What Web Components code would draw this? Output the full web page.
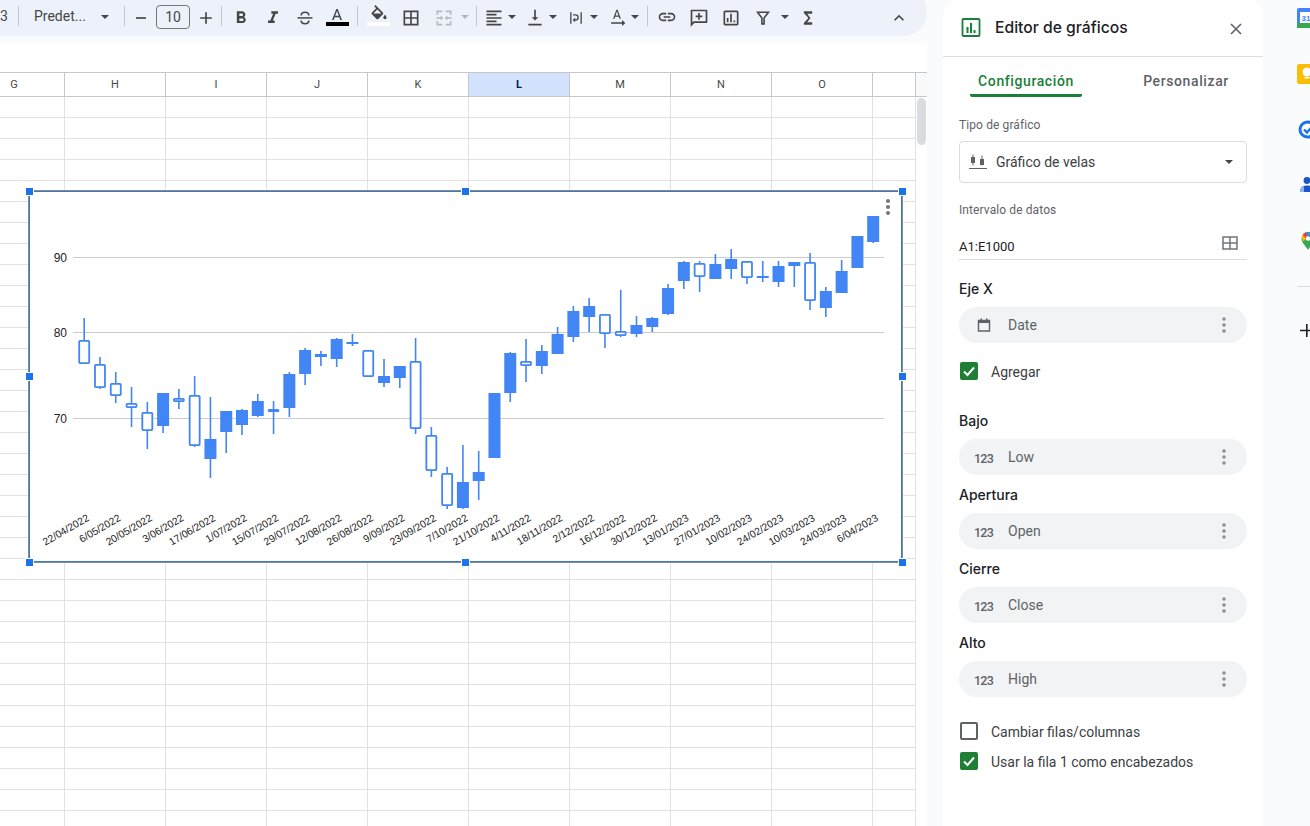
<!doctype html>
<html lang="es">
<head>
<meta charset="utf-8">
<title>Editor de gráficos</title>
<style>
  html, body { margin: 0; height: 100%; overflow: hidden; background: #f9fbfd; }
  body { font-family: Roboto, "Liberation Sans", sans-serif; }
  app-shell { height: 826px; }
</style>
</head>
<body>
<app-shell>
  <sheet-area slot="sheet">
    <sheet-toolbar slot="toolbar">
      <tb-btn w="18" text="3" pad="0"></tb-btn>
      <tb-sep></tb-sep>
      <tb-btn w="105" text="Predet..." pad="15" gap="15" caret></tb-btn>
      <tb-sep></tb-sep>
      <tb-btn w="31" icon="minus"></tb-btn>
      <tb-size>10</tb-size>
      <tb-btn w="31" icon="plus"></tb-btn>
      <tb-sep></tb-sep>
      <tb-btn w="3"></tb-btn>
      <tb-btn icon="bold"></tb-btn>
      <tb-btn icon="italic"></tb-btn>
      <tb-btn icon="strike"></tb-btn>
      <tb-btn icon="textcolor" size="24"></tb-btn>
      <tb-btn w="4"></tb-btn>
      <tb-sep></tb-sep>
      <tb-btn w="3"></tb-btn>
      <tb-btn icon="fill" size="24"></tb-btn>
      <tb-btn w="2"></tb-btn>
      <tb-btn icon="borders"></tb-btn>
      <tb-btn w="1"></tb-btn>
      <tb-btn icon="merge"></tb-btn>
      <tb-btn w="16" caret dim pad="1"></tb-btn>
      <tb-sep></tb-sep>
      <tb-btn w="4"></tb-btn>
      <tb-btn w="41" icon="align" pad="4" gap="5" caret></tb-btn>
      <tb-btn w="41" icon="valign" pad="4" gap="5" caret></tb-btn>
      <tb-btn w="41" icon="wrap" pad="4" gap="5" caret></tb-btn>
      <tb-btn w="41" icon="rotate" pad="4" gap="5" caret></tb-btn>
      <tb-btn w="2"></tb-btn>
      <tb-sep></tb-sep>
      <tb-btn w="3"></tb-btn>
      <tb-btn icon="link"></tb-btn>
      <tb-btn icon="comment"></tb-btn>
      <tb-btn icon="chart"></tb-btn>
      <tb-btn w="45" icon="filter" pad="7" gap="9" caret></tb-btn>
      <tb-btn icon="sigma"></tb-btn>
      <tb-btn class="end" icon="chevron"></tb-btn>
    </sheet-toolbar>
    <col-header slot="header">
      <col-cell class="first">G</col-cell>
      <col-cell>H</col-cell>
      <col-cell>I</col-cell>
      <col-cell>J</col-cell>
      <col-cell>K</col-cell>
      <col-cell selected>L</col-cell>
      <col-cell>M</col-cell>
      <col-cell>N</col-cell>
      <col-cell>O</col-cell>
    </col-header>
    <sheet-grid slot="grid">
      <candle-chart></candle-chart>
    </sheet-grid>
  </sheet-area>
  <chart-editor slot="panel"></chart-editor>
  <side-rail slot="rail"></side-rail>
</app-shell>

<script>
const ICONS = {
  minus: '<path d="M6 11h12v2H6z"/>',
  plus: '<path d="M19 13h-6v6h-2v-6H5v-2h6V5h2v6h6z"/>',
  bold: '<path d="M15.6 10.79c.97-.67 1.65-1.77 1.65-2.79 0-2.26-1.75-4-4-4H7v14h7.04c2.09 0 3.71-1.7 3.71-3.79 0-1.52-.86-2.82-2.15-3.42zM10 6.5h3c.83 0 1.5.67 1.5 1.5s-.67 1.5-1.5 1.5h-3v-3zm3.5 9H10v-3h3.5c.83 0 1.5.67 1.5 1.5s-.67 1.5-1.5 1.5z"/>',
  italic: '<path d="M10 4v3h2.21l-3.42 8H6v3h8v-3h-2.21l3.42-8H18V4z"/>',
  strike: '<path d="M3 11h18v1.8H3z"/><path d="M16.6 9c0-2.4-2-3.9-4.6-3.9S7.4 6.6 7.4 9M7.4 15c0 2.4 2 3.9 4.6 3.9s4.6-1.5 4.6-3.9" fill="none" stroke="currentColor" stroke-width="1.9"/>',
  textcolor: '<path d="M11.300 3 7 14h1.700l1-2.800h4.600l1 2.800H17L12.700 3h-1.400zm-1.100 6.800L12 4.900l1.800 4.900h-3.600z"/><path d="M1 16h23v4H1z" fill="#000"/>',
  fill: '<g transform="translate(4 -1) scale(.84)"><path d="M16.56 8.94 7.620 0 6.210 1.410l2.380 2.380-5.150 5.150c-.59.59-.59 1.540 0 2.120l5.500 5.500c.29.29.68.44 1.060.44s.77-.15 1.060-.44l5.500-5.500c.59-.58.59-1.530 0-2.120zM5.210 10 10 5.210 14.790 10H5.210zM19 11.500s-2 2.170-2 3.500c0 1.100.9 2 2 2s2-.9 2-2c0-1.330-2-3.500-2-3.500z"/></g><path d="M2 16h23v4H2z" fill="#fff"/>',
  borders: '<path d="M3 3v18h18V3H3zm8 16H5v-6h6v6zm0-8H5V5h6v6zm8 8h-6v-6h6v6zm0-8h-6V5h6v6z"/>',
  merge: '<path d="M3 3h7v2H5v3H3zM14 3h7v5h-2V5h-5zM3 16h2v3h5v2H3zM19 16h2v5h-7v-2h5zM3 11h5V9l3 3-3 3v-2H3zM21 11h-5V9l-3 3 3 3v-2h5z" fill="#b4b8bc"/>',
  align: '<path d="M3 3h18v2H3zM3 7h12v2H3zM3 11h18v2H3zM3 15h12v2H3zM3 19h18v2H3z"/>',
  valign: '<path d="M16 11h-3V2h-2v9H8l4 4zM4 19v2h16v-2z"/>',
  wrap: '<path d="M5 5h1.600v14H5zM17.400 5H19v14h-1.600zM8.500 7.500v1.600h3a2.200 2.200 0 0 1 0 4.400H11v-2l-3 2.800 3 2.800v-2h.5a3.800 3.800 0 0 0 0-7.600z"/>',
  rotate: '<path d="M11.200 2 7.300 13h1.700l.8-2.400h4.400l.8 2.400h1.700L12.800 2h-1.600zm-.9 7.100L12 4l1.700 5.100h-3.400z"/><path d="M5 17h13v-2.500l4 3.500-4 3.500V19H5z"/>',
  link: '<path transform="translate(0 -1.200)" d="M3.900 12c0-1.710 1.390-3.100 3.100-3.100h4V7H7c-2.760 0-5 2.240-5 5s2.240 5 5 5h4v-1.900H7c-1.710 0-3.100-1.390-3.100-3.100zM8 13h8v-2H8v2zm9-6h-4v1.900h4c1.710 0 3.100 1.390 3.100 3.100s-1.390 3.100-3.100 3.100h-4V17h4c2.760 0 5-2.240 5-5s-2.240-5-5-5z"/>',
  comment: '<path d="M3 2h18a1 1 0 0 1 1 1v14a1 1 0 0 1-1 1H6.500L2 22.500V3a1 1 0 0 1 1-1zm1 2v13.500L5.700 16H20V4H4zm7 2h2v3h3v2h-3v3h-2v-3H8V9h3z"/>',
  chart: '<path d="M19 3H5c-1.100 0-2 .9-2 2v14c0 1.100.9 2 2 2h14c1.100 0 2-.9 2-2V5c0-1.100-.9-2-2-2zm0 16H5V5h14v14zM7 12h2v5H7zm4-5h2v10h-2zm4 8h2v2h-2z"/>',
  filter: '<path d="M5.500 5h13l-5.200 7v7h-2.600v-7z" fill="none" stroke="currentColor" stroke-width="1.900"/>',
  sigma: '<path d="M17 4H7v2l5.500 6L7 18v2h10v-3h-6l4-5-4-5h6z"/>',
  chevron: '<path d="M7.410 15.410 12 10.830l4.590 4.580L18 14l-6-6-6 6z"/>'
};

function defineShadow(name, css, html) {
  customElements.define(name, class extends HTMLElement {
    connectedCallback() {
      if (this.shadowRoot) return;
      this.attachShadow({ mode: "open" }).innerHTML = `<style>${css}</style>${html}`;
    }
  });
}

defineShadow("app-shell", `
  :host { display: flex; width: 1310px; }
  .panel { margin-left: 16px; display: block; }
`, `<slot name="sheet"></slot><div class="panel"><slot name="panel"></slot></div><slot name="rail"></slot>`);

defineShadow("sheet-area", `
  :host { display: flex; flex-direction: column; width: 927px; height: 826px; flex: none; overflow: hidden; }
  .blank { height: 28px; margin-top: 8px; background: #fff; flex: none; }
`, `<slot name="toolbar"></slot><div class="blank"></div><slot name="header"></slot><slot name="grid"></slot>`);

defineShadow("sheet-toolbar", `
  :host {
    display: flex; align-items: center; flex: none; box-sizing: border-box;
    height: 48px; margin-top: -12px; padding-top: 10px; padding-right: 12px;
    background: #edf2fa; border-radius: 0 24px 24px 0; color: #444746;
  }
  ::slotted(.end) { margin-left: auto; }
`, `<slot></slot>`);

class TbBtn extends HTMLElement {
  connectedCallback() {
    if (this.shadowRoot) return;
    const w = this.getAttribute("w") ?? "32";
    const icon = this.getAttribute("icon");
    const text = this.getAttribute("text");
    const caret = this.hasAttribute("caret");
    const pad = this.getAttribute("pad");
    const gap = this.getAttribute("gap") ?? "0";
    const dim = this.hasAttribute("dim");
    const size = this.getAttribute("size") ?? "20";
    const left = pad !== null;
    this.attachShadow({ mode: "open" }).innerHTML = `
      <style>
        :host { display: flex; align-items: center; flex: none; box-sizing: border-box; height: 24px; width: ${w}px;
          justify-content: ${left ? "flex-start" : "center"}; padding-left: ${pad ?? 0}px;
          font: 14px Roboto, "Liberation Sans", sans-serif; color: #444746; }
        span.t { position: relative; top: -1px; }
        svg { width: ${size}px; height: ${size}px; margin: 0 -1px; fill: currentColor; flex: none; display: block; position: relative; top: 1px; overflow: visible; }
        .caret { width: 0; height: 0; border: 4px solid transparent; border-top-color: ${dim ? "#b4b8bc" : "#444746"}; border-bottom: 0; margin-left: ${gap}px; flex: none; }
      </style>
      ${text ? `<span class="t">${text}</span>` : ""}
      ${icon ? `<svg viewBox="0 0 24 24">${ICONS[icon]}</svg>` : ""}
      ${caret ? `<span class="caret"></span>` : ""}
    `;
  }
}
customElements.define("tb-btn", TbBtn);

defineShadow("tb-sep", `
  :host { display: block; flex: none; width: 1px; height: 20px; margin-top: -2px; background: #c7c7c7; }
`, ``);

defineShadow("tb-size", `
  :host { display: flex; flex: none; box-sizing: border-box; width: 34px; height: 24px; align-items: center; justify-content: center;
    border: 1px solid #747775; border-radius: 4px; font: 14px Roboto, "Liberation Sans", sans-serif; color: #444746; }
`, `<slot></slot>`);

defineShadow("col-header", `
  :host { display: flex; flex: none; box-sizing: border-box; height: 25px; background: #fff; overflow: hidden;
    border-top: 1px solid #c7c7c7; border-bottom: 1px solid #c7c7c7; }
  .rest { width: 43px; flex: none; border-right: 1px solid #c7c7c7; box-sizing: border-box; }
  .corner { flex: 1; background: #f8f9fa; }
  ::slotted(.first) { margin-left: -36px; }
`, `<slot></slot><div class="rest"></div><div class="corner"></div>`);

class ColCell extends HTMLElement {
  connectedCallback() {
    if (this.shadowRoot) return;
    const sel = this.hasAttribute("selected");
    this.attachShadow({ mode: "open" }).innerHTML = `
      <style>
        :host { display: flex; flex: none; box-sizing: border-box; width: 101px; align-items: center; justify-content: center;
          border-right: 1px solid #c7c7c7; font: ${sel ? 700 : 400} 11px Roboto, "Liberation Sans", sans-serif;
          color: ${sel ? "#041e49" : "#444746"}; background: ${sel ? "#d3e3fd" : "#fff"}; }
      </style><slot></slot>`;
  }
}
customElements.define("col-cell", ColCell);

defineShadow("sheet-grid", `
  :host { display: block; position: relative; flex: 1; background-color: #fff; }
  .cols { position: absolute; inset: 0 12px 0 0;
    background: repeating-linear-gradient(90deg, #e1e1e1 0 1px, transparent 1px 101px) 64px 0 / calc(100% - 64px) 100% no-repeat; }
  .rows { position: absolute; inset: 0 12px 0 0;
    background: repeating-linear-gradient(180deg, transparent 0 20px, #e1e1e1 20px 21px); }
  .bar { position: absolute; top: 0; bottom: 0; right: 0; width: 12px; background: #fff; border-left: 1px solid #e1e1e1; box-sizing: border-box; }
  .thumb { position: absolute; left: 1px; top: 1px; width: 9px; height: 47px; border-radius: 5px; background: #dadce0; }
`, `<div class="rows"></div><div class="cols"></div><div class="bar"><div class="thumb"></div></div><slot></slot>`);

// x index follows the weekly candles: [wickTop, wickBottom, bodyTop, bodyBottom, hollow]
const CANDLES = [
  [318,364,340,364,1],[357,389,364,388,1],[372,403,383,396,1],[387,427,403,408,1],[402,449,412,431,1],
  [393,433,393,426,0],[389,409,398,402,1],[376,447,395,446,1],[397,478,439,459,0],[411,453,411,432,0],
  [409,435,410,425,0],[394,417,401,416,0],[401,434,409,412,1],[372,417,374,408,0],[348,385,350,374,0],
  [351,366,354,357,0],[338,367,339,359,0],[334,346,342,344,0],[350,377,350,377,1],[359,387,376,383,0],
  [366,388,366,378,0],[338,434,361,429,1],[427,477,435,471,1],[467,509,473,506,1],[445,509,482,508,0],
  [451,500,472,481,0],[393,458,393,458,0],[352,402,353,393,0],[339,382,361,366,1],[345,374,351,366,0],
  [327,354,334,354,0],[306,342,311,337,0],[298,332,306,317,0],[314,348,314,334,1],[290,337,331,336,1],
  [316,337,325,334,0],[317,332,318,327,0],[284,315,288,314,0],[261,289,262,281,0],[261,292,263,277,1],
  [254,279,264,279,0],[249,279,259,269,0],[261,284,261,278,1],[261,282,276,278,0],[261,287,266,282,0],
  [262,287,262,266,0],[253,310,262,301,1],[287,317,291,308,0],[260,293,271,293,0],[236,268,236,268,0],
  [216,243,216,242,0]
];
const DATES = ["22/04/2022","6/05/2022","20/05/2022","3/06/2022","17/06/2022","1/07/2022","15/07/2022","29/07/2022",
  "12/08/2022","26/08/2022","9/09/2022","23/09/2022","7/10/2022","21/10/2022","4/11/2022","18/11/2022","2/12/2022",
  "16/12/2022","30/12/2022","13/01/2023","27/01/2023","10/02/2023","24/02/2023","10/03/2023","24/03/2023","6/04/2023"];

class CandleChart extends HTMLElement {
  connectedCallback() {
    if (this.shadowRoot) return;
    const blue = "#4285f4";
    const xAt = (i) => 84.2 + i * 15.78;
    const lines = [[90, 257.5], [80, 332.5], [70, 418.5]].map(([v, y]) => `
      <line x1="73" x2="884" y1="${y}" y2="${y}" stroke="#ccc"/>
      <text x="67" y="${y + 4.5}" text-anchor="end" font-size="12">${v}</text>`).join("");
    const candles = CANDLES.map(([wt, wb, bt, bb, hollow], i) => {
      const x = xAt(i);
      const body = hollow
        ? `<rect x="${x - 5}" y="${bt + 0.9}" width="10" height="${Math.max(bb - bt - 1.8, 1)}" rx="0.8" fill="#fff" stroke="${blue}" stroke-width="1.8"/>`
        : `<rect x="${x - 6}" y="${bt}" width="12" height="${bb - bt}" fill="${blue}"/>`;
      return `<line x1="${x}" x2="${x}" y1="${wt}" y2="${wb}" stroke="${blue}" stroke-width="1.6"/>${body}`;
    }).join("");
    const dates = DATES.map((d, i) => {
      const x = xAt(i * 2) + 5.7;
      return `<text x="${x}" y="520" text-anchor="end" font-size="10.3" transform="rotate(-30 ${x} 520)">${d}</text>`;
    }).join("");
    const handles = ["tl", "tc", "tr", "ml", "mr", "bl", "bc", "br"].map((c) => `<i class="${c}"></i>`).join("");
    this.attachShadow({ mode: "open" }).innerHTML = `
      <style>
        :host { position: absolute; left: 28px; top: 93px; width: 875px; height: 373px; box-sizing: border-box;
          border: 1px solid #8a8a8a; box-shadow: inset 0 0 0 1px #3b78c9; background: #fff; display: block; }
        svg { position: absolute; left: -1px; top: -1px; width: 875px; height: 373px; font-family: "Liberation Sans", Arial, sans-serif; fill: #222; }
        i { position: absolute; box-sizing: border-box; width: 9px; height: 9px; background: #1a73e8; border: 1px solid #fff; }
        .tl, .tc, .tr { top: -4px; }
        .bl, .bc, .br { bottom: -5px; }
        .ml, .mr { top: calc(50% - 4.5px); }
        .tl, .ml, .bl { left: -4px; }
        .tr, .mr, .br { right: -5px; }
        .tc, .bc { left: calc(50% - 4.5px); }
      </style>
      <svg viewBox="28 190 875 373">
        ${lines}${candles}${dates}
        <g fill="#757575"><circle cx="888" cy="201" r="2"/><circle cx="888" cy="207" r="2"/><circle cx="888" cy="213" r="2"/></g>
      </svg>
      ${handles}`;
  }
}
customElements.define("candle-chart", CandleChart);

const KEBAB = `<svg viewBox="0 0 20 20" width="20" height="20" fill="#8c9095"><circle cx="10" cy="4" r="1.800"/><circle cx="10" cy="10" r="1.800"/><circle cx="10" cy="16" r="1.800"/></svg>`;
const EVENT_ICON = `<svg viewBox="0 0 14 14" width="14" height="14"><path d="M1.500 2.500h11v10.500h-11z" fill="none" stroke="#5f6368" stroke-width="1.400"/><path d="M1 2h12v3H1z M3.500 0.500h1.500v2H3.500z M9 0.500h1.500v2H9z" fill="#5f6368"/></svg>`;

class DataField extends HTMLElement {
  connectedCallback() {
    if (this.shadowRoot) return;
    const date = this.getAttribute("kind") === "date";
    this.attachShadow({ mode: "open" }).innerHTML = `
      <style>
        :host { display: block; }
        .label { font: 500 14px/20px Inter, Roboto, sans-serif; color: #202124; height: 20px; margin-bottom: 8px; }
        .pill { display: flex; align-items: center; height: 36px; border-radius: 18px; background: #f1f3f4; padding-right: 13px;
          font: 14px Roboto, sans-serif; color: #5f6368; }
        .icon { width: 49px; flex: none; display: flex; justify-content: center; align-items: center; }
        .num { font: 500 12.5px Roboto, sans-serif; letter-spacing: -.7px; color: #5f6368; margin-top: 2px; }
        .val { flex: 1; }
        svg { display: block; }
      </style>
      <div class="label"><slot name="label"></slot></div>
      <div class="pill">
        <span class="icon">${date ? EVENT_ICON : `<span class="num">123</span>`}</span>
        <span class="val"><slot></slot></span>
        ${KEBAB}
      </div>`;
  }
}
customElements.define("data-field", DataField);

class CheckRow extends HTMLElement {
  connectedCallback() {
    if (this.shadowRoot) return;
    const on = this.hasAttribute("checked");
    this.attachShadow({ mode: "open" }).innerHTML = `
      <style>
        :host { display: flex; align-items: center; height: 18px; font: 14px Roboto, sans-serif; color: #3c4043; }
        .box { box-sizing: border-box; width: 18px; height: 18px; margin: 0 13px 0 1px; border-radius: 2px; flex: none;
          ${on ? "background: #1e7e34;" : "border: 2px solid #5f6368;"} }
        .txt { margin-top: 2px; }
        svg { display: block; }
      </style>
      <span class="box">${on ? `<svg viewBox="0 0 18 18" width="18" height="18"><path d="M4 9.500 7.500 13 14 5.500" fill="none" stroke="#fff" stroke-width="2"/></svg>` : ""}</span>
      <span class="txt"><slot></slot></span>`;
  }
}
customElements.define("check-row", CheckRow);

defineShadow("chart-editor", `
  :host { display: block; box-sizing: border-box; width: 320px; height: 826px; background: #fff; border-radius: 16px 16px 0 0;
    font-family: Roboto, sans-serif; }
  .head { display: flex; align-items: center; box-sizing: border-box; height: 57px; padding: 0 20px 1px 18px; border-bottom: 1px solid #dadce0; }
  .head h1 { flex: 1; margin: 0 0 0 14px; font: 500 15.7px Inter, Roboto, sans-serif; color: #202124; }
  .head .close { margin-top: 2px; }
  .tabs { display: flex; height: 40px; padding-left: 27px; font: 500 14px Roboto, sans-serif; letter-spacing: .6px; }
  .tab { width: 112px; box-sizing: border-box; padding-top: 16px; text-align: center; color: #188038; border-bottom: 3px solid #188038; border-radius: 0 0 2px 2px; }
  .tab.off { margin-left: 48px; color: #5f6368; border-color: transparent; }
  .body { padding: 0 16px; }
  .cap { font: 12px/20px Roboto, sans-serif; letter-spacing: .1px; color: #5f6368; height: 20px; }
  .select { display: flex; align-items: center; box-sizing: border-box; height: 42px; margin-top: 6px; padding: 0 13px 0 9px;
    border: 1px solid #dadce0; border-radius: 4px; font: 14px Roboto, sans-serif; color: #3c4043; }
  .select span { flex: 1; margin-left: 9px; }
  .caret { flex: none; width: 0; height: 0; border: 4px solid transparent; border-top-color: #444746; border-bottom: 0; }
  .range { display: flex; align-items: center; justify-content: space-between; box-sizing: border-box; height: 28px; margin-top: 12px; padding: 2px 9px 0 0;
    border-bottom: 1px solid #dadce0; font: 13px Roboto, sans-serif; color: #202124; }
  svg { display: block; flex: none; }
  data-field { margin-top: 10px; }
  .x { margin-top: 19px; }
  .agg { margin-top: 19px; }
  .low { margin-top: 31px; }
  .swap { margin-top: 25px; }
  .hdr { margin-top: 12px; }
`, `
  <div class="head">
    <svg width="20" height="19" viewBox="0 0 20 19" fill="none"><rect x="1.500" y="1" width="17" height="17" rx="1" stroke="#188038" stroke-width="1.800"/><path d="M5.500 9h2v6h-2zM9 5h2v10H9zM12.500 12h2v3h-2z" fill="#188038"/></svg>
    <h1>Editor de gráficos</h1>
    <svg class="close" width="14" height="14" viewBox="0 0 14 14"><path d="M2 2l10 10M12 2 2 12" stroke="#5f6368" stroke-width="1.600"/></svg>
  </div>
  <div class="tabs"><div class="tab">Configuración</div><div class="tab off">Personalizar</div></div>
  <div class="body">
    <div class="cap" style="margin-top:18px">Tipo de gráfico</div>
    <div class="select">
      <svg width="18" height="16" viewBox="0 0 18 16"><path d="M0 14.500h18" stroke="#5f6368"/><path d="M4 0.500v11M13 1.500v10" stroke="#5f6368"/><path d="M2 3h4v6H2zM11 5h4v6h-4z" fill="#5f6368"/></svg>
      <span>Gráfico de velas</span><i class="caret"></i>
    </div>
    <div class="cap" style="margin-top:17px">Intervalo de datos</div>
    <div class="range">A1:E1000
      <svg style="margin-top:-8px" width="16" height="14" viewBox="0 0 16 14"><path d="M1 1h14v12H1zM1 7h14M8 1v12" fill="none" stroke="#70757a" stroke-width="1.500"/></svg>
    </div>
    <data-field class="x" kind="date"><span slot="label">Eje X</span>Date</data-field>
    <check-row class="agg" checked>Agregar</check-row>
    <data-field class="low"><span slot="label">Bajo</span>Low</data-field>
    <data-field><span slot="label">Apertura</span>Open</data-field>
    <data-field><span slot="label">Cierre</span>Close</data-field>
    <data-field><span slot="label">Alto</span>High</data-field>
    <check-row class="swap">Cambiar filas/columnas</check-row>
    <check-row class="hdr" checked>Usar la fila 1 como encabezados</check-row>
  </div>
`);

defineShadow("side-rail", `
  :host { display: flex; flex-direction: column; width: 47px; height: 826px; box-sizing: border-box; padding: 8px 0 0 34px; overflow: hidden; flex: none; }
  svg { display: block; flex: none; margin-bottom: 36px; overflow: visible; }
  .txt { font: 700 8px "Liberation Sans", sans-serif; fill: #4285f4; }
  .rule { width: 20px; height: 1px; background: #dadce0; margin: -2px 0 37px; flex: none; }
  .add { margin-bottom: 0; }
`, `
  <svg width="20" height="20" viewBox="0 0 20 20"><rect width="20" height="20" rx="2" fill="#4285f4"/><rect y="15" width="20" height="5" fill="#34a853"/><rect x="3" y="4" width="14" height="11" fill="#fff"/><text class="txt" x="4.500" y="12.500">31</text></svg>
  <svg width="20" height="20" viewBox="0 0 20 20"><rect width="20" height="20" y="0" rx="2" fill="#fbbc04"/><circle cx="10" cy="8" r="4.500" fill="#fff"/><rect x="7.500" y="13" width="5" height="1.500" fill="#fff"/></svg>
  <svg width="20" height="20" viewBox="0 0 20 20" style="margin-left:1px"><circle cx="9.500" cy="9.500" r="7.500" fill="none" stroke="#1a73e8" stroke-width="3"/><path d="M6 9.500 9 12.500 15 5.500" fill="none" stroke="#1a73e8" stroke-width="2.400"/></svg>
  <svg width="20" height="20" viewBox="0 0 20 20" style="margin-left:3px"><circle cx="7" cy="4.500" r="3.400" fill="#1a56c9"/><path d="M0 16c0-4.500 3-6.500 7-6.500s7 2 7 6.500z" fill="#1a56c9"/><path d="M0 16c0-3 1.500-5 4-5.800V16z" fill="#8ab4f8"/></svg>
  <svg width="20" height="20" viewBox="0 0 20 20" style="margin-left:4px"><path d="M7 0a6.500 6.500 0 0 0-6.500 6.500C.5 11 5 14 7 18c2-4 6.500-7 6.500-11.500A6.500 6.500 0 0 0 7 0z" fill="#34a853"/><path d="M1 4A6.500 6.500 0 0 1 5 .3L7 4 2.500 9.500A7 7 0 0 1 1 4z" fill="#fbbc04"/><path d="M2 3A6.500 6.500 0 0 1 5 .3L7 4 4.500 6.500z" fill="#ea4335"/><path d="M5 .3A6.500 6.500 0 0 1 12 2.500L7 6.500z" fill="#4285f4"/><circle cx="7" cy="6.500" r="2.300" fill="#fff"/></svg>
  <div class="rule"></div>
  <svg class="add" width="13" height="13" viewBox="0 0 13 13" style="margin-left:3px"><path d="M6 0h1.600v13H6zM0 5.700h13v1.600H0z" fill="#202124"/></svg>
`);
</script>
</body>
</html>
